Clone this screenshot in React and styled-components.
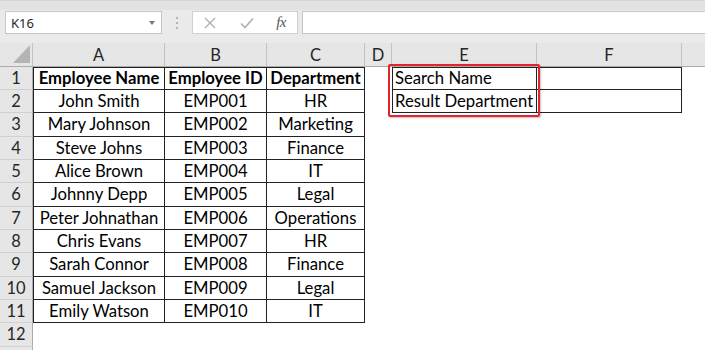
import React from 'react';
import styled, { createGlobalStyle } from 'styled-components';

const GlobalStyle = createGlobalStyle`
  html, body { margin: 0; padding: 0; background: #fff; overflow: hidden; }
  body { font-family: Lato, "Noto Sans", sans-serif; }
`;

const Page = styled.div`
  width: 705px;
  height: 350px;
  overflow: hidden;
  display: flex;
  flex-direction: column;
  background: #fff;
`;

const FormulaRow = styled.div`
  flex: none;
  height: 43.33px;
  box-sizing: border-box;
  padding: 10px 0 0 5px;
  display: flex;
  align-items: flex-start;
  background: linear-gradient(#e2e2e2 0, #e2e2e2 9px, #eaeaea 9px);
  border-top: 1px solid #d6d6d6;
`;

const NameBox = styled.div`
  width: 157px;
  height: 23px;
  box-sizing: border-box;
  background: #fff;
  border: 1px solid #c6c6c6;
  display: flex;
  align-items: center;
  justify-content: space-between;
  padding: 0 6px 0 5px;
  font-family: "Noto Sans", "Open Sans", sans-serif;
  font-size: 13px;
  color: #262626;
`;

const Caret = styled.span`
  width: 0;
  height: 0;
  border-left: 3.5px solid transparent;
  border-right: 3.5px solid transparent;
  border-top: 4px solid #777;
  margin-top: 1px;
`;

const Grip = styled.div`
  width: 30px;
  height: 23px;
  display: flex;
  flex-direction: column;
  align-items: center;
  justify-content: center;
  gap: 3px;
`;

const GripDot = styled.span`
  width: 2px;
  height: 2px;
  background: #b3b3b3;
`;

const FxBox = styled.div`
  width: 106px;
  height: 23px;
  box-sizing: border-box;
  background: #fff;
  border: 1px solid #d0d0d0;
  display: flex;
  align-items: center;
  padding: 0 11px 0 10px;
  justify-content: space-between;
`;

const FxText = styled.span`
  font-family: "Liberation Serif", "DejaVu Serif", serif;
  font-style: italic;
  font-size: 15px;
  color: #555;
  letter-spacing: -0.5px;
`;

const FormulaInput = styled.div`
  flex: 1;
  height: 23px;
  margin-left: 4px;
  margin-right: -4px;
  box-sizing: border-box;
  background: #fff;
  border: 1px solid #c6c6c6;
`;

const Sheet = styled.div`
  flex: none;
  position: relative;
  display: grid;
  grid-template-columns: 33px 132px 102px 98px 27px 145px 145px 1fr;
  grid-template-rows: repeat(14, 23.333px);
`;

const ColHeader = styled.div`
  box-sizing: border-box;
  background: #e6e6e6;
  border-right: ${(p) => (p.$last ? 'none' : '1px solid #c3c3c3')};
  border-bottom: 1px solid #ababab;
  display: flex;
  align-items: flex-end;
  justify-content: center;
  padding-bottom: 1px;
  font-size: 16.5px;
  color: #262626;
  line-height: 20px;
`;

const Corner = styled.div`
  box-sizing: border-box;
  background: #e6e6e6;
  border-right: 1px solid #c3c3c3;
  border-bottom: 1px solid #ababab;
  position: relative;
`;

const CornerTriangle = styled.span`
  position: absolute;
  right: 2px;
  bottom: 3px;
  width: 0;
  height: 0;
  border-left: 17px solid transparent;
  border-bottom: 18px solid #b4b4b4;
`;

const RowHeader = styled.div`
  box-sizing: border-box;
  background: #e6e6e6;
  border-right: 1px solid #ababab;
  border-bottom: 1px solid #d0d0d0;
  display: flex;
  align-items: center;
  justify-content: center;
  font-size: 16.5px;
  line-height: 20px;
  color: #262626;
`;

const Cell = styled.div`
  box-sizing: border-box;
  display: flex;
  align-items: center;
  justify-content: ${(p) => (p.$left ? 'flex-start' : 'center')};
  padding: 0 2px;
  white-space: nowrap;
  overflow: visible;
  font-size: 16.7px;
  line-height: 20px;
  font-weight: ${(p) => (p.$bold ? 700 : 400)};
  color: #000;
  border-right: ${(p) => (p.$boxed ? '1px solid #222' : 'none')};
  border-bottom: ${(p) => (p.$boxed ? '1px solid #222' : 'none')};
  border-top: ${(p) => (p.$topEdge ? '1px solid #222' : 'none')};
  border-left: ${(p) => (p.$leftEdge ? '1px solid #222' : 'none')};
`;

const Highlight = styled.div`
  position: absolute;
  left: 388px;
  top: 21px;
  width: 152px;
  height: 53px;
  box-sizing: border-box;
  border: 2px solid #e3242b;
  border-radius: 2px;
  box-shadow: 1px 1px 2px rgba(0, 0, 0, 0.25);
  pointer-events: none;
`;

const XIcon = () => (
  <svg width="14" height="14" viewBox="0 0 14 14">
    <path d="M2 2 L12 12 M12 2 L2 12" stroke="#b0b0b0" strokeWidth="1.4" fill="none" />
  </svg>
);

const CheckIcon = () => (
  <svg width="16" height="14" viewBox="0 0 16 14">
    <path d="M2 7.5 L6 11.5 L14 2.5" stroke="#b0b0b0" strokeWidth="1.6" fill="none" />
  </svg>
);

const columns = ['A', 'B', 'C', 'D', 'E', 'F', ''];

const data = [
  ['Employee Name', 'Employee ID', 'Department'],
  ['John Smith', 'EMP001', 'HR'],
  ['Mary Johnson', 'EMP002', 'Marketing'],
  ['Steve Johns', 'EMP003', 'Finance'],
  ['Alice Brown', 'EMP004', 'IT'],
  ['Johnny Depp', 'EMP005', 'Legal'],
  ['Peter Johnathan', 'EMP006', 'Operations'],
  ['Chris Evans', 'EMP007', 'HR'],
  ['Sarah Connor', 'EMP008', 'Finance'],
  ['Samuel Jackson', 'EMP009', 'Legal'],
  ['Emily Watson', 'EMP010', 'IT'],
];

const lookup = ['Search Name', 'Result Department'];

export default function App() {
  const rows = [];
  for (let r = 0; r < 13; r++) {
    const rec = data[r];
    const lk = lookup[r];
    rows.push(
      <React.Fragment key={r}>
        <RowHeader>{r < 12 ? String(r + 1) : ''}</RowHeader>
        {[0, 1, 2].map((c) => (
          <Cell
            key={c}
            $boxed={!!rec}
            $topEdge={r === 0}
            $leftEdge={!!rec && c === 0}
            $bold={r === 0}
          >
            {rec ? rec[c] : ''}
          </Cell>
        ))}
        <Cell />
        <Cell $left $boxed={!!lk} $topEdge={r === 0} $leftEdge={!!lk}>
          {lk || ''}
        </Cell>
        <Cell $boxed={!!lk} $topEdge={r === 0} />
        <Cell />
      </React.Fragment>
    );
  }

  return (
    <Page>
      <GlobalStyle />
      <FormulaRow>
        <NameBox>
          <span>K16</span>
          <Caret />
        </NameBox>
        <Grip>
          <GripDot />
          <GripDot />
          <GripDot />
        </Grip>
        <FxBox>
          <XIcon />
          <CheckIcon />
          <FxText>fx</FxText>
        </FxBox>
        <FormulaInput />
      </FormulaRow>
      <Sheet>
        <Corner>
          <CornerTriangle />
        </Corner>
        {columns.map((c, i) => (
          <ColHeader key={i} $last={i === columns.length - 1}>
            {c}
          </ColHeader>
        ))}
        {rows}
        <Highlight />
      </Sheet>
    </Page>
  );
}
